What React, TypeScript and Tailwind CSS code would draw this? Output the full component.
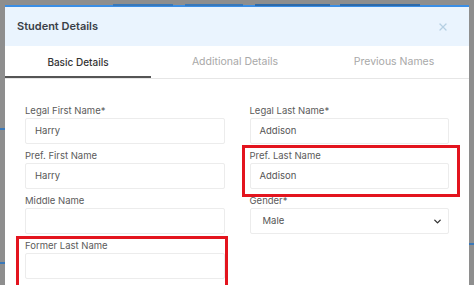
import { X, ChevronDown } from "lucide-react";

const font = { fontFamily: "Inter, 'Noto Sans', sans-serif" };

function Field({ label, value }: { label: string; value?: string }) {
  return (
    <div className="flex flex-col">
      <div className="h-[14px] text-[9.5px] leading-[14px] text-[#5b5b5b]">{label}</div>
      <div className="flex h-[26px] items-center rounded-[2px] border border-[#ececec] bg-white px-[9px] text-[9.5px] text-[#555]">
        {value}
      </div>
    </div>
  );
}

export default function App() {
  return (
    <div
      className="relative h-[285px] w-[474px] overflow-hidden bg-[#8e8e8e] pl-[5px] pr-[5px] pt-[5px]"
      style={font}
    >
      {/* backdrop bits peeking out */}
      <div className="absolute left-[113px] top-[4px] h-[2px] w-[60px] bg-[#3a78b8]" />
      <div className="absolute left-[185px] top-[4px] h-[2px] w-[58px] bg-[#3a78b8]" />
      <div className="absolute left-[255px] top-[4px] h-[2px] w-[75px] bg-[#2f6aa8]" />
      <div className="absolute left-[340px] top-[4px] h-[2px] w-[80px] bg-[#2f6aa8]" />
      <div className="absolute left-0 top-[128px] h-[2px] w-[5px] bg-[#3a78b8]" />
      <div className="absolute left-0 top-[262px] h-[2px] w-[5px] bg-[#3a78b8]" />
      <div className="absolute right-0 top-[243px] h-[2px] w-[5px] bg-[#3a78b8]" />

      <div className="h-[290px] w-full border-t-2 border-[#3a8ee6] bg-white">
        <div className="flex h-[39px] items-center justify-between bg-[#eaf4fe] pl-[12px] pr-[20px]">
          <span className="text-[11px] font-semibold text-[#3a3f47]">Student Details</span>
          <X className="h-[12px] w-[12px] text-[#b5cfe3]" strokeWidth={2.5} />
        </div>

        <div className="flex h-[33px] border-b border-[#e6e6e6] text-[10.5px]">
          <div className="flex w-[146px] items-center justify-center border-b-2 border-[#555] pt-[2px] text-[10px] font-medium text-[#333]">
            Basic Details
          </div>
          <div className="flex w-[168px] items-center justify-center text-[#a8a8a8]">Additional Details</div>
          <div className="flex flex-1 items-center justify-center text-[#a8a8a8]">Previous Names</div>
        </div>

        <div className="grid grid-cols-2 gap-x-[25px] gap-y-[5px] pl-[20px] pr-[20px] pt-[25px]">
          <Field label="Legal First Name*" value="Harry" />
          <Field label="Legal Last Name*" value="Addison" />
          <Field label="Pref. First Name" value="Harry" />
          <Field label="Pref. Last Name" value="Addison" />
          <Field label="Middle Name" />
          <div className="flex flex-col">
            <div className="h-[14px] text-[9.5px] leading-[14px] text-[#5b5b5b]">Gender*</div>
            <div className="flex h-[26px] items-center justify-between rounded-[2px] border border-[#ececec] bg-white pl-[12px] pr-[5px] text-[9.5px] text-[#555]">
              <span>Male</span>
              <ChevronDown className="h-[11px] w-[11px] text-[#333]" strokeWidth={3} />
            </div>
          </div>
          <Field label="Former Last Name" />
        </div>
      </div>

      {/* highlight boxes drawn over the form */}
      <div className="absolute left-[242px] top-[145px] h-[52px] w-[218px] border-[3px] border-[#e3141e]" />
      <div className="absolute left-[16px] top-[236px] h-[54px] w-[212px] border-[3px] border-[#e3141e]" />
    </div>
  );
}
